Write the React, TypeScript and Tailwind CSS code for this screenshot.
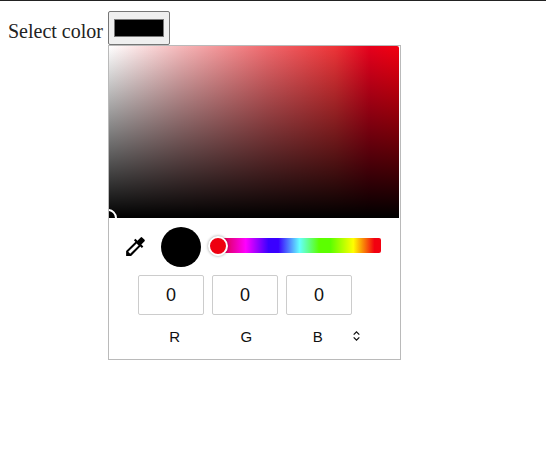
import { useState } from "react";
import { MdColorize } from "react-icons/md";

const CHANNELS = ["R", "G", "B"] as const;

function SaturationField() {
  return (
    <div className="relative h-[172px] w-[290px] overflow-hidden rounded-tr-[2px] bg-[linear-gradient(to_right,#ffffff_0%,#f5b6b8_25%,#f0686c_55%,#ee3438_78%,#e6001c_90%,#f20010_100%)]">
      <div className="h-full w-full bg-linear-to-b from-black/0 to-black" />
      {/* Selection ring, clipped by the corner of the field */}
      <div className="absolute top-[163px] -left-[10px] h-[18px] w-[18px] rounded-full border-2 border-white bg-black" />
    </div>
  );
}

function HueSlider() {
  return (
    <div className="relative ml-[17px] h-[15px] w-[163px] rounded-[2px] bg-[linear-gradient(to_right,#f20010_0%,#e8008c_8%,#ff00ff_17%,#3a00ff_31%,#3a00ff_37%,#64ffff_50%,#5cff00_62%,#5cff00_69%,#ffff00_83%,#f20010_96%)]">
      <div className="absolute -top-[2px] -left-[10px] h-5 w-5 rounded-full border-2 border-white bg-[#ee0010] shadow-[0_0_3px_rgba(0,0,0,0.4)]" />
    </div>
  );
}

function FormatToggle() {
  return (
    <button type="button" aria-label="Change format" className="ml-[1px] flex h-10 w-[6px] items-center justify-center">
      <svg width="7" height="10" viewBox="0 0 7 10" fill="none" stroke="#111" strokeWidth="1.3" className="shrink-0">
        <path d="M0.7 3.6 3.5 0.9 6.3 3.6" />
        <path d="M0.7 6.4 3.5 9.1 6.3 6.4" />
      </svg>
    </button>
  );
}

export default function App() {
  const [values, setValues] = useState([0, 0, 0]);

  const updateChannel = (index: number, value: string) => {
    setValues(values.map((v, i) => (i === index ? Number(value) || 0 : v)));
  };

  return (
    <div className="h-[473px] w-[546px] overflow-hidden border-t border-[#222] bg-white text-black">
      <div className="flex items-start pt-[10px] pl-2">
        <label className="w-[100px] pt-[6px] font-['Liberation_Serif',serif] text-[20px] leading-7 whitespace-nowrap text-[#222]">
          Select color
        </label>

        <div>
          <button
            type="button"
            aria-label="Open color picker"
            className="flex h-[34px] w-[62px] items-center justify-center rounded-[2px] border border-[#767676] bg-[#efefef]"
          >
            <span className="h-[18px] w-[50px] border border-[#777] bg-black" />
          </button>

          {/* Picker panel */}
          <div className="h-[315px] w-[293px] border border-[#bababa] bg-white font-['Liberation_Sans',sans-serif]">
            <SaturationField />

            <div className="mt-[9px] flex h-10 items-center">
              <MdColorize size={25} className="-mt-[2px] ml-[14px] shrink-0" />
              <div className="ml-[13px] h-10 w-10 shrink-0 rounded-full bg-black" />
              <div className="-mt-[3px]">
                <HueSlider />
              </div>
            </div>

            <div className="mt-2 ml-[29px] flex gap-2">
              {CHANNELS.map((name, i) => (
                <input
                  key={name}
                  aria-label={name}
                  value={values[i]}
                  onChange={(e) => updateChannel(i, e.target.value)}
                  className="h-10 w-[66px] rounded-[2px] border border-[#cccccc] text-center text-[18px] text-[#111]"
                />
              ))}
            </div>

            <div className="mt-[2px] ml-[30px] flex h-10 items-center text-[15px] text-[#111]">
              {CHANNELS.map((name) => (
                <span key={name} className="w-[71.5px] text-center">
                  {name}
                </span>
              ))}
              <div className="-mt-[2px] -ml-[1px]">
                <FormatToggle />
              </div>
            </div>
          </div>
        </div>
      </div>
    </div>
  );
}
